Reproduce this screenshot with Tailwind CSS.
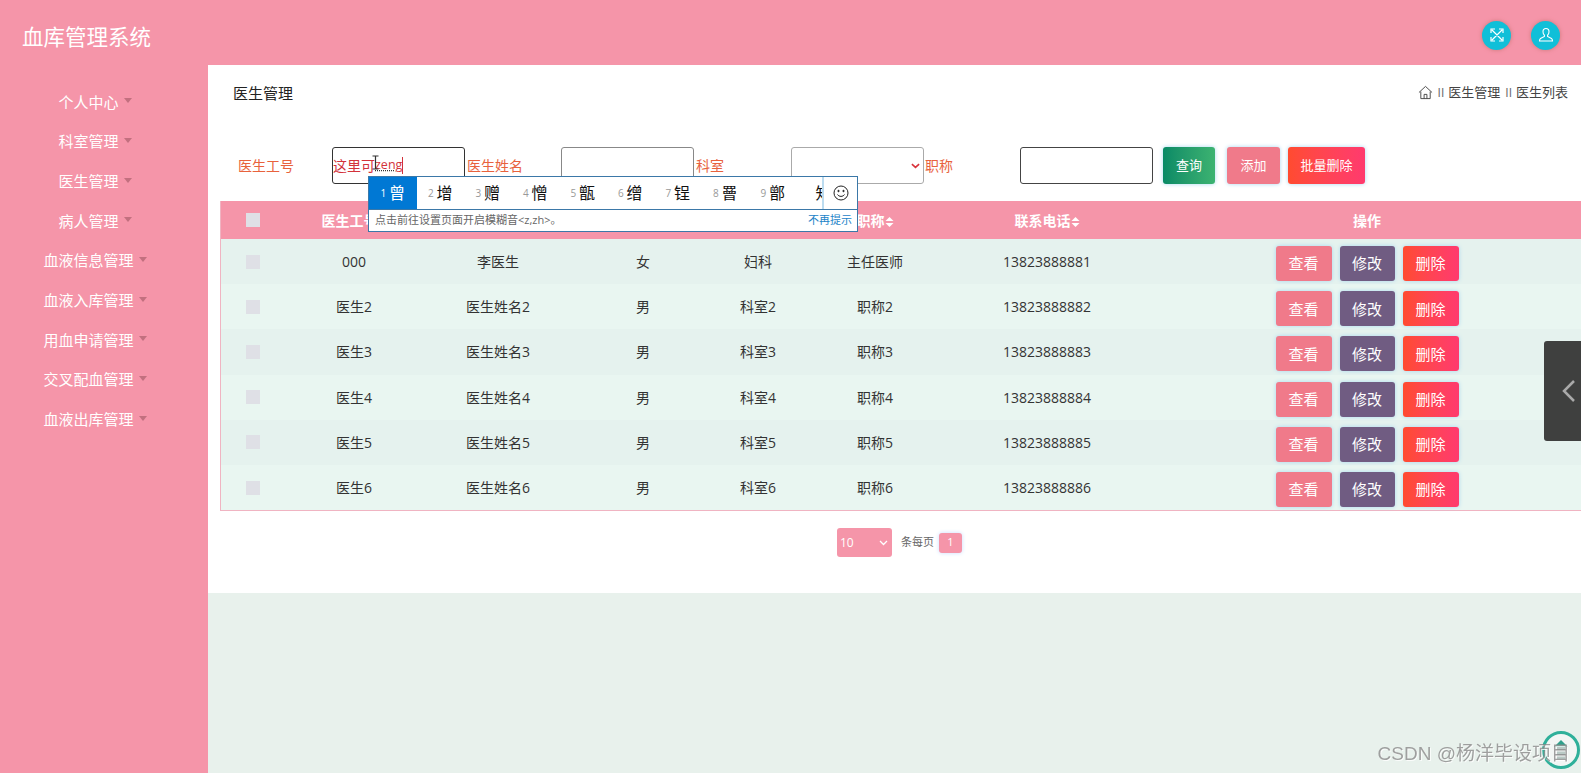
<!DOCTYPE html>
<html lang="zh-CN">
<head>
    <meta charset="UTF-8">
    <title>血库管理系统</title>
    <script src="https://cdn.jsdelivr.net/npm/@tailwindcss/browser@4"></script>
</head>
<body class="h-[773px] overflow-hidden bg-[#f595a9] font-['Open_Sans','Noto_Sans_CJK_SC',sans-serif] text-[#333]">

    <!-- Header -->
    <header class="h-[65px] flex items-center justify-between pl-[22px] pr-[21px]">
        <h1 class="pt-[10px] text-[21.5px] text-white">血库管理系统</h1>
        <div class="flex gap-[20px] pt-[5px]">
            <button class="w-[29px] h-[29px] rounded-full bg-[#10bfd8] shadow-[0_0_4px_#c77] flex items-center justify-center">
                <svg width="14" height="14" viewBox="0 0 14 14" fill="none" stroke="white" stroke-width="1.2"><path d="M2 2l10 10M12 2L2 12M1 5V1h4M9 1h4v4M13 9v4H9M5 13H1V9"/></svg>
            </button>
            <button class="w-[29px] h-[29px] rounded-full bg-[#10bfd8] shadow-[0_0_4px_#c77] flex items-center justify-center">
                <svg width="16" height="16" viewBox="0 0 16 16" fill="none" stroke="white" stroke-width="1.1"><path d="M8 1.500c-2 0-3 1.400-3 3.200 0 1.600.7 2.800 1.400 3.500v1.200L2.500 11.500c-.8.500-1 1-1 2.500h13c0-1.500-.2-2-1-2.500L9.600 9.400V8.200c.7-.7 1.400-1.900 1.400-3.500 0-1.800-1-3.200-3-3.200z"/></svg>
            </button>
        </div>
    </header>

    <div class="flex h-[708px]">
        <!-- Sidebar -->
        <nav id="sidebar" class="w-[208px] shrink-0 pt-[17px] flex flex-col text-[15px] text-white"></nav>

        <!-- Main -->
        <main class="relative flex-1 min-w-0 bg-[#e8f1ec] overflow-hidden">
            <div class="h-[528px] bg-white">
                <div class="flex items-center justify-between pl-[25px] pr-[13px] h-[56px]">
                    <h2 class="text-[15px] text-[#222]">医生管理</h2>
                    <div class="flex items-center gap-[4px] text-[13px] text-[#444]">
                        <svg class="mb-[2px] mr-[1px]" width="15" height="15" viewBox="0 0 16 16" fill="none" stroke="#444" stroke-width="1"><path d="M1 8l7-6.500L15 8M3 7v7.500h10V7M6.500 14.500V10h3v4.500"/></svg>
                        <span class="text-[#666] text-[12px]">II</span><span>医生管理</span><span class="ml-px text-[#666] text-[12px]">II</span><span>医生列表</span>
                    </div>
                </div>

                <!-- Search form -->
                <div class="relative flex items-center h-[37px] mt-[26px] pl-[30px] text-[14px] text-[#e8623d]">
                    <label class="w-[94px]">医生工号</label>
                    <div class="w-[133px] h-[37px] border border-[#333] rounded-[3px] flex items-center text-[#d3323a] leading-none">
                        这里可<span class="text-[12.500px] underline decoration-dotted decoration-[#333]">zeng</span><span class="w-px h-[17px] bg-[#d3323a]"></span>
                    </div>
                    <label class="w-[96px] pl-[2px]">医生姓名</label>
                    <div class="w-[133px] h-[37px] border border-[#888] rounded-[3px]"></div>
                    <label class="w-[97px] pl-[2px]">科室</label>
                    <div class="w-[133px] h-[37px] border border-[#aaa] rounded-[3px] flex items-center justify-end pr-[3px]">
                        <svg width="9" height="6" viewBox="0 0 10 6" fill="none" stroke="#d8323a" stroke-width="1.800"><path d="M1 1l4 3.500L9 1"/></svg>
                    </div>
                    <label class="w-[96px] pl-[1px]">职称</label>
                    <div class="w-[133px] h-[37px] border border-[#444] rounded-[3px]"></div>
                    <button class="ml-[10px] w-[52px] h-[37px] rounded-[3px] text-[13px] text-white bg-gradient-to-r from-[#078a66] to-[#3cb371] shadow-[0_0_4px_#a8d8f0]">查询</button>
                    <button class="ml-[12px] w-[53px] h-[37px] rounded-[3px] text-[13px] text-white bg-[#f07a8a] shadow-[0_0_4px_#a8d8f0]">添加</button>
                    <button class="ml-[8px] w-[77px] h-[37px] rounded-[3px] text-[13px] text-white bg-gradient-to-r from-[#ff4b2f] to-[#ff3a6e] shadow-[0_0_4px_#a8d8f0]">批量删除</button>

                    <!-- Cursor over the first input -->
                    <svg class="absolute left-[164px] top-[8px]" width="7" height="16" viewBox="0 0 7 16" fill="none" stroke="#333" stroke-width="1.200"><path d="M.5 1h6M3.500 1v13M.5 14h6"/></svg>

                    <!-- IME candidate window -->
                    <div class="absolute z-10 left-[160px] top-[29px] w-[490px] h-[56px] bg-white border border-[#3b78a8] text-[#111]">
                        <div id="ime" class="flex h-[33px] border-b border-[#3b78a8] overflow-hidden"></div>
                        <div class="flex items-center justify-between h-[21px] pl-[6px] pr-[5px] text-[11px] text-[#666]">
                            <span>点击前往设置页面开启模糊音&lt;z,zh&gt;。</span>
                            <span class="text-[#2383c8]">不再提示</span>
                        </div>
                    </div>
                </div>

                <!-- Table -->
                <div class="ml-[12px] mt-[17px] w-[1361px] border-l border-b border-[#f0b4c2]">
                    <div id="thead" class="grid grid-cols-[64px_138px_150px_140px_90px_144px_200px_440px] items-center h-[38px] bg-[#f595a9] text-[14px] font-bold text-white text-center"></div>
                    <div id="tbody"></div>
                </div>

                <!-- Pagination -->
                <div class="ml-[12px] pr-[2px] mt-[17px] flex items-center justify-center text-[11px] text-[#666]">
                    <div class="w-[55px] h-[29px] rounded-[3px] bg-[#f595a9] text-white flex items-center justify-between pl-[3px] pr-[4px] text-[12px]">
                        <span>10</span>
                        <svg width="9" height="6" viewBox="0 0 9 6" fill="none" stroke="white" stroke-width="1.300"><path d="M1 1l3.500 3.500L8 1"/></svg>
                    </div>
                    <span class="ml-[9px]">条每页</span>
                    <button class="ml-[5px] w-[23px] h-[20px] rounded-[3px] bg-[#f595a9] text-white shadow-[0_0_4px_#c9dcff]">1</button>
                </div>
            </div>

            <!-- Side drawer handle -->
            <div class="absolute right-0 top-[276px] w-[37px] h-[100px] rounded-l-[3px] bg-[#3f403f] flex items-center justify-end pr-[5px]">
                <svg width="14" height="22" viewBox="0 0 14 22" fill="none" stroke="#aaa" stroke-width="2.500"><path d="M12 1L2 11l10 10"/></svg>
            </div>

            <!-- Back to top -->
            <div class="absolute right-[1px] bottom-[4px] w-[38px] h-[38px] rounded-full border-[3px] border-[#2fb09a] bg-[#f2f6f4] flex items-center justify-center">
                <svg width="16" height="22" viewBox="0 0 16 22"><path d="M8 1l7 7H1z" fill="#2fa08c"/><path d="M4 8h8v12H4z" fill="#b9c9c5"/></svg>
            </div>

            <!-- Watermark -->
            <span class="absolute right-[11px] bottom-[5px] text-[19px] text-[#8a8a8a]/80 font-['Liberation_Sans','Noto_Sans_CJK_SC',sans-serif] drop-shadow-[1px_1px_0_#fff]">CSDN @杨洋毕设项目</span>
        </main>
    </div>

    <script>
        const caret = '<span class="ml-[5px] mb-[2px] w-0 h-0 border-x-[4.500px] border-x-transparent border-t-[5px] border-t-[#c2707f]"></span>';
        const menus = ["个人中心", "科室管理", "医生管理", "病人管理", "血液信息管理", "血液入库管理", "用血申请管理", "交叉配血管理", "血液出库管理"];
        document.getElementById("sidebar").innerHTML = menus.map(m =>
            `<a class="h-[39.700px] flex items-center justify-center pr-[18px]">${m}${caret}</a>`
        ).join("");

        const chars = ["曾", "增", "赠", "憎", "甑", "缯", "锃", "罾", "鄫"];
        document.getElementById("ime").innerHTML = chars.map((c, i) => {
            const cell = i === 0 ? "bg-[#0078d4] text-white" : "";
            const num = i === 0 ? "text-white" : "text-[#999]";
            return `<div class="w-[47.500px] shrink-0 flex items-center justify-center gap-[3px] text-[16px] ${cell}"><span class="text-[10px] ${num}">${i + 1}</span>${c}</div>`;
        }).join("") + `<div class="w-[25px] shrink-0 overflow-hidden text-[16px] flex items-center pl-[19px]"><span class="shrink-0">知</span></div>
            <div class="w-[36px] shrink-0 border-l-2 border-[#bcdcf0] flex items-center justify-center">
                <svg width="16" height="16" viewBox="0 0 16 16" fill="none" stroke="#222" stroke-width="1"><circle cx="8" cy="8" r="7"/><circle cx="5.500" cy="6" r=".7" fill="#222"/><circle cx="10.500" cy="6" r=".7" fill="#222"/><path d="M4.500 9.500c1.500 2.500 5.500 2.500 7 0"/></svg>
            </div>`;

        const sort = '<svg class="inline-block" width="9" height="10" viewBox="0 0 8 10" fill="white"><path d="M4 0l4 4H0zM0 6h8l-4 4z"/></svg>';
        const heads = ["医生工号", "医生姓名", "性别", "科室", "职称", "联系电话"];
        document.getElementById("thead").innerHTML =
            '<div class="flex justify-center"><span class="w-[14px] h-[14px] bg-[#dfe0e6]"></span></div>' +
            heads.map(h => `<div>${h}${sort}</div>`).join("") + "<div>操作</div>";

        const rows = [
            ["000", "李医生", "女", "妇科", "主任医师", "13823888881"],
            ["医生2", "医生姓名2", "男", "科室2", "职称2", "13823888882"],
            ["医生3", "医生姓名3", "男", "科室3", "职称3", "13823888883"],
            ["医生4", "医生姓名4", "男", "科室4", "职称4", "13823888884"],
            ["医生5", "医生姓名5", "男", "科室5", "职称5", "13823888885"],
            ["医生6", "医生姓名6", "男", "科室6", "职称6", "13823888886"]
        ];
        document.getElementById("tbody").innerHTML = rows.map((r, i) => {
            const bg = i % 2 === 0 ? "bg-[#e5f2ee]" : "bg-[#e9f6f1]";
            return `<div class="grid grid-cols-[64px_138px_150px_140px_90px_144px_200px_440px] items-center h-[45.200px] text-[14px] text-center ${bg}">
                <div class="flex justify-center"><span class="w-[14px] h-[14px] bg-[#dfe0e6]"></span></div>
                ${r.map(v => `<div>${v}</div>`).join("")}
                <div class="flex justify-center gap-[8px] pt-[4px] text-[15px] text-white">
                    <button class="w-[56px] h-[35px] rounded-[3px] bg-[#f07a8a] shadow-[0_0_4px_#a8d8f0]">查看</button>
                    <button class="w-[55px] h-[35px] rounded-[3px] bg-[#705c82] shadow-[0_0_4px_#a8d8f0]">修改</button>
                    <button class="w-[56px] h-[35px] rounded-[3px] bg-gradient-to-r from-[#ff4b2f] to-[#ff3a6e] shadow-[0_0_4px_#a8d8f0]">删除</button>
                </div>
            </div>`;
        }).join("");
    </script>
</body>
</html>
